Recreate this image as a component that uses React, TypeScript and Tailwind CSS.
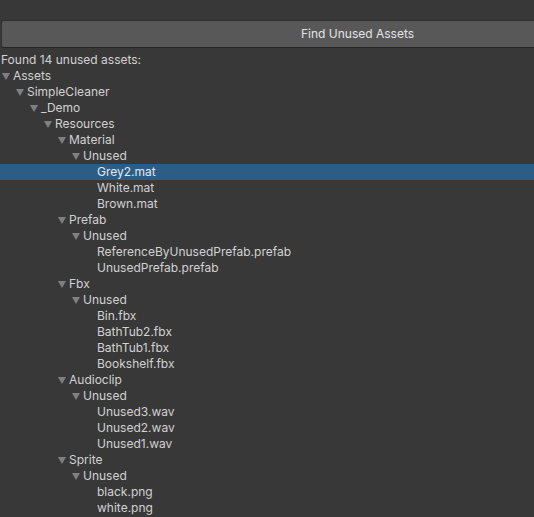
import React from 'react';

type Node = { name: string; children?: Node[] };

const tree: Node = {
  name: 'Assets',
  children: [
    {
      name: 'SimpleCleaner',
      children: [
        {
          name: '_Demo',
          children: [
            {
              name: 'Resources',
              children: [
                { name: 'Material', children: [{ name: 'Unused', children: [{ name: 'Grey2.mat' }, { name: 'White.mat' }, { name: 'Brown.mat' }] }] },
                { name: 'Prefab', children: [{ name: 'Unused', children: [{ name: 'ReferenceByUnusedPrefab.prefab' }, { name: 'UnusedPrefab.prefab' }] }] },
                { name: 'Fbx', children: [{ name: 'Unused', children: [{ name: 'Bin.fbx' }, { name: 'BathTub2.fbx' }, { name: 'BathTub1.fbx' }, { name: 'Bookshelf.fbx' }] }] },
                { name: 'Audioclip', children: [{ name: 'Unused', children: [{ name: 'Unused3.wav' }, { name: 'Unused2.wav' }, { name: 'Unused1.wav' }] }] },
                { name: 'Sprite', children: [{ name: 'Unused', children: [{ name: 'black.png' }, { name: 'white.png' }] }] },
              ],
            },
          ],
        },
      ],
    },
  ],
};

const Arrow = () => (
  <svg width="8" height="7" viewBox="0 0 8 7" className="mr-[3px] shrink-0">
    <path d="M0 0H8L4 7Z" fill="#808080" />
  </svg>
);

const Row = ({ node, depth, selected }: { node: Node; depth: number; selected: string }) => {
  const isSel = node.name === selected;
  return (
    <>
      <div
        className={`flex items-center h-4 ${isSel ? 'bg-[#2c5d87] text-[#e8e8e8]' : 'text-[#d2d2d2]'}`}
        style={{ paddingLeft: 2 + depth * 14 }}
      >
        {node.children ? <Arrow /> : <span className="w-[11px] shrink-0" />}
        <span className="whitespace-nowrap">{node.name}</span>
      </div>
      {node.children?.map((c, i) => (
        <Row key={i} node={c} depth={depth + 1} selected={selected} />
      ))}
    </>
  );
};

export default function App() {
  return (
    <div
      className="w-[534px] h-[517px] overflow-hidden bg-[#383838] text-[12px] leading-4"
      style={{ fontFamily: 'Inter, "Noto Sans", sans-serif' }}
    >
      <div className="pt-5 pl-px">
        <button className="w-[713px] h-7 rounded-[3px] bg-[#585858] border border-[#303030] border-b-[#242424] text-[#e4e4e4] text-[12px]">
          Find Unused Assets
        </button>
      </div>
      <div className="mt-[4px]">
        <div className="h-4 pl-px text-[#d2d2d2]">Found 14 unused assets:</div>
        <Row node={tree} depth={0} selected="Grey2.mat" />
      </div>
    </div>
  );
}
